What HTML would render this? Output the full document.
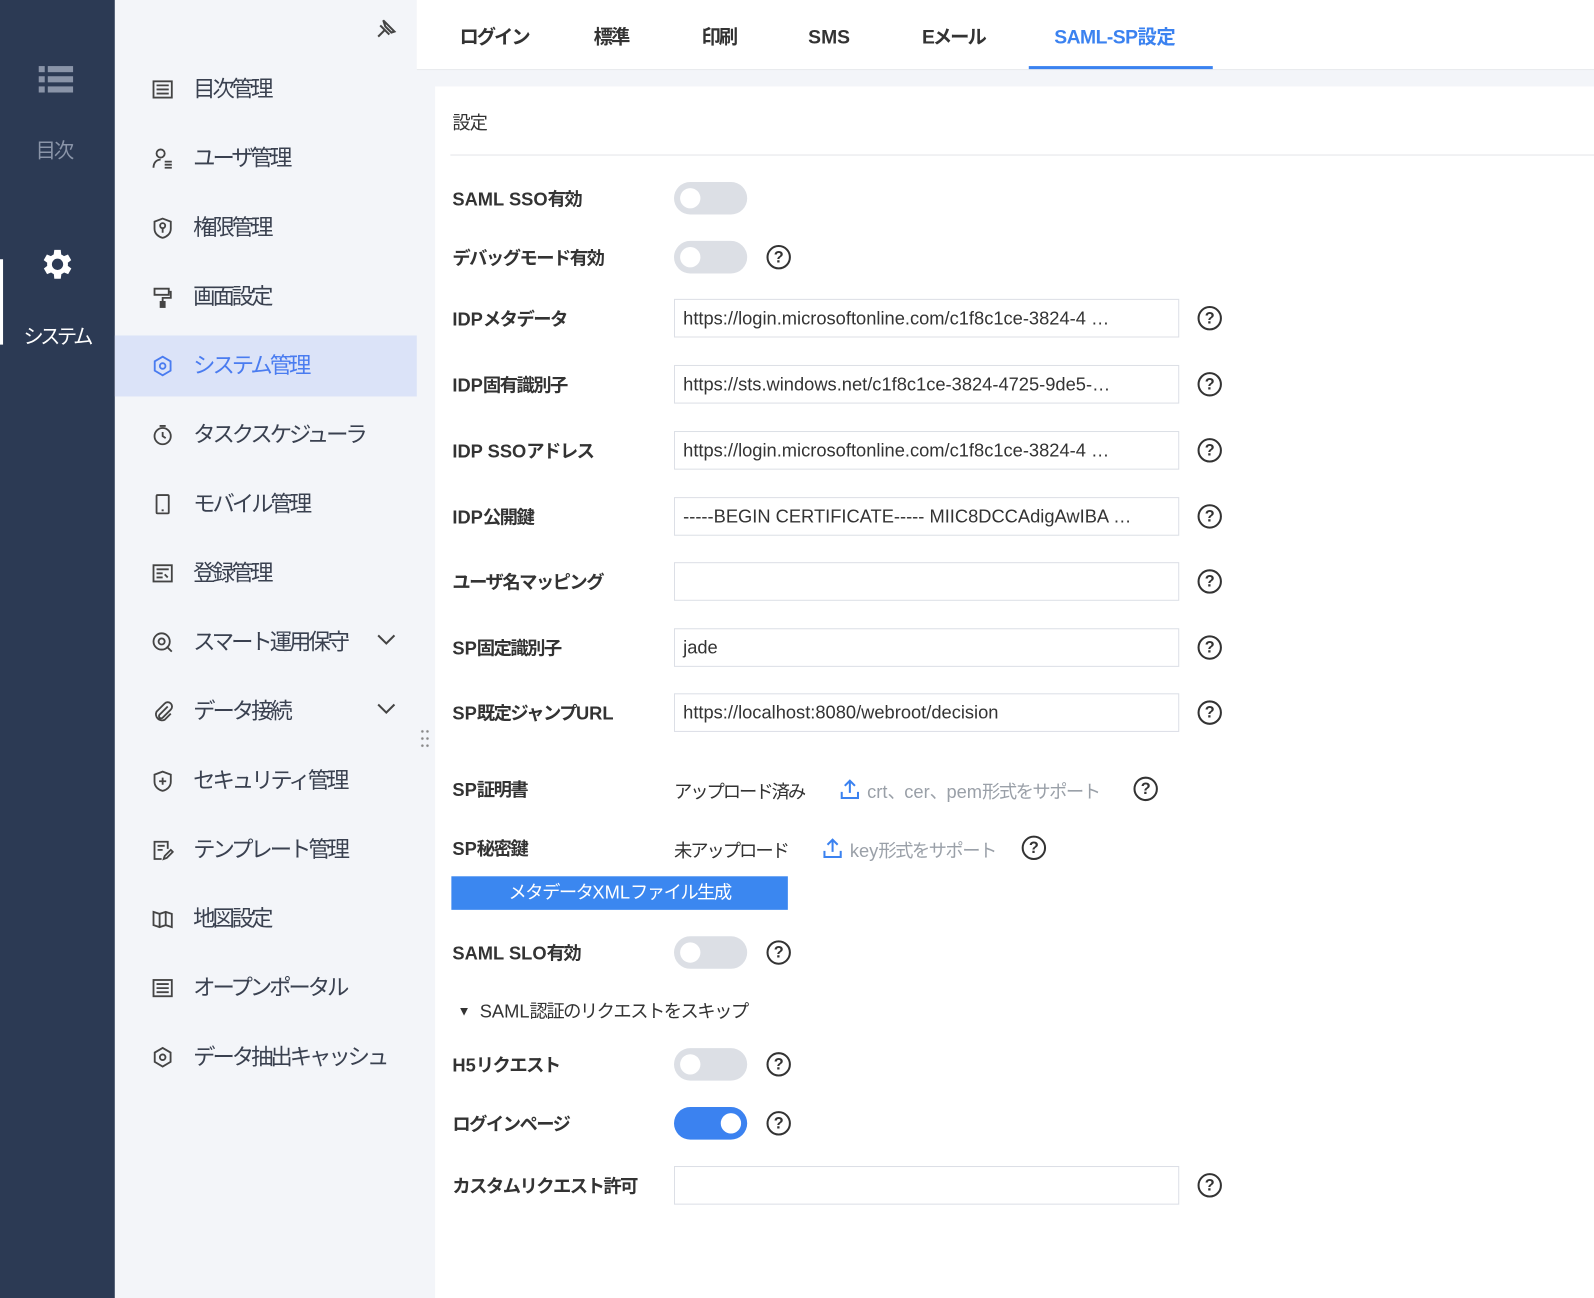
<!DOCTYPE html>
<html><head><meta charset="utf-8"><style>
*{box-sizing:border-box;margin:0;padding:0}
html,body{width:1594px;height:1298px;overflow:hidden;background:#f3f5f9}
body{font-family:"Liberation Sans","Noto Sans CJK JP",sans-serif;color:#333}
#w{position:absolute;left:0;top:0;width:1568px;height:1277px;transform:scale(1.01658);transform-origin:0 0}
.a{position:absolute}
.side{left:0;top:0;width:113px;height:1277px;background:#2c3a54}
.menu{left:113px;top:0;width:297px;height:1277px;background:#f3f5f9}
.mi{position:absolute;left:0;width:297px;height:60px;line-height:60px;font-size:22px;color:#3a4150;letter-spacing:-3px;white-space:nowrap}
.mi .t{position:absolute;left:77px}
.mi svg{position:absolute;left:36px;top:19px}
.mi.act{background:#dbe3f8;color:#4a7cf0}
.top{left:410px;top:0;width:1158px;height:69px;background:#fff;border-bottom:1px solid #e6e8eb}
.tab{position:absolute;top:25px;height:26px;line-height:26px;font-size:19px;font-weight:bold;color:#333;letter-spacing:-2px}
.card{left:428px;top:85px;width:1140px;height:1192px;background:#fff}
.lab{position:absolute;left:445px;font-size:18px;font-weight:bold;color:#333;transform:translateY(-50%);letter-spacing:-1.5px;white-space:nowrap}
.lab b{letter-spacing:0}
.tg{position:absolute;left:663px;width:72px;height:32px;border-radius:16px;background:#dcdfe5;transform:translateY(-50%)}
.tg:after{content:"";position:absolute;left:6px;top:6px;width:20px;height:20px;border-radius:50%;background:#fff}
.tg.on{background:#3b82f0}.tg.on:after{left:46px}
.inp{position:absolute;left:663px;width:497px;height:38px;border:1px solid #dcdfe6;font-size:18px;line-height:36px;padding-left:8px;color:#333;white-space:nowrap;overflow:hidden;transform:translateY(-50%);font-family:"Liberation Sans",sans-serif}
.q{position:absolute;width:24px;height:24px;border:2px solid #333;border-radius:50%;font-size:16px;font-weight:bold;text-align:center;line-height:21px;transform:translateY(-50%);color:#333}
.tx{position:absolute;font-size:18px;letter-spacing:-2px;white-space:nowrap}
.tx i{font-style:normal;letter-spacing:0}
</style></head><body><div id="w">
<div class="a side">
 <svg class="a" style="left:38px;top:64px" width="34" height="28" viewBox="0 0 34 28" fill="#8a94a8"><rect x="0" y="1" width="6" height="6"/><rect x="9" y="1" width="25" height="6"/><rect x="0" y="11" width="6" height="6"/><rect x="9" y="11" width="25" height="6"/><rect x="0" y="21" width="6" height="6"/><rect x="9" y="21" width="25" height="6"/></svg>
 <div class="a" style="left:35px;top:132px;font-size:20px;color:#8a94a8;letter-spacing:-2px">目次</div>
 <div class="a" style="left:0;top:255px;width:3px;height:84px;background:#fff"></div>
 <svg class="a" style="left:36px;top:241px" width="38" height="38" viewBox="0 0 24 24"><path fill="#fff" d="M19.4 13a7.5 7.5 0 000-2l2.1-1.6-2-3.5-2.5 1a7 7 0 00-1.7-1L15 3h-4l-.4 2.9a7 7 0 00-1.7 1l-2.5-1-2 3.5L6.6 11a7.5 7.5 0 000 2l-2.1 1.6 2 3.5 2.5-1a7 7 0 001.7 1L11 21h4l.4-2.9a7 7 0 001.7-1l2.5 1 2-3.5zM13 15.5A3.5 3.5 0 1113 8.5a3.5 3.5 0 010 7z"/></svg>
 <div class="a" style="left:23px;top:315px;font-size:20px;color:#fff;letter-spacing:-3.5px">システム</div>
</div>
<div class="a menu">
 <svg class="a" style="left:255px;top:16px" width="24" height="24" viewBox="0 0 24 24" fill="none" stroke="#444" stroke-width="2"><path d="M9 4l11 11-3 1-6-6zM4 20l6-6M6 9l9 9"/></svg>
 <div class="mi" style="top:58px"><svg width="22" height="22" viewBox="0 0 22 22" fill="none" stroke="#444" stroke-width="1.8"><rect x="2" y="3" width="18" height="16"/><path d="M5 7h12M5 11h12M5 15h12"/></svg><span class="t">目次管理</span></div>
 <div class="mi" style="top:126px"><svg width="22" height="22" viewBox="0 0 22 22" fill="none" stroke="#444" stroke-width="1.8"><circle cx="9" cy="6" r="4"/><path d="M2 20c0-5 3-8 7-8M13 14h7M13 17h7M13 20h7"/></svg><span class="t">ユーザ管理</span></div>
 <div class="mi" style="top:194px"><svg width="22" height="22" viewBox="0 0 22 22" fill="none" stroke="#444" stroke-width="1.8"><path d="M11 2l8 3v7c0 5-4 8-8 9-4-1-8-4-8-9V5z"/><circle cx="11" cy="9" r="2.5"/><path d="M11 12v4"/></svg><span class="t">権限管理</span></div>
 <div class="mi" style="top:262px"><svg width="22" height="22" viewBox="0 0 22 22" fill="none" stroke="#444" stroke-width="1.8"><path d="M3 3h14v6H3zM17 6h2v6h-8v4"/><rect x="9" y="16" width="4" height="5" fill="#444"/></svg><span class="t">画面設定</span></div>
 <div class="mi act" style="top:330px"><svg width="22" height="22" viewBox="0 0 24 24" fill="none" stroke="#4a7cf0" stroke-width="2"><path d="M12 2l8.5 5v10L12 22l-8.5-5V7z"/><circle cx="12" cy="12" r="3"/></svg><span class="t">システム管理</span></div>
 <div class="mi" style="top:398px"><svg width="22" height="22" viewBox="0 0 22 22" fill="none" stroke="#444" stroke-width="1.8"><circle cx="11" cy="12" r="8"/><path d="M11 8v4l3 2M8 2h6"/></svg><span class="t">タスクスケジューラ</span></div>
 <div class="mi" style="top:466px"><svg width="22" height="22" viewBox="0 0 22 22" fill="none" stroke="#444" stroke-width="1.8"><rect x="5" y="2" width="12" height="18" rx="1"/><path d="M10 17h2"/></svg><span class="t">モバイル管理</span></div>
 <div class="mi" style="top:534px"><svg width="22" height="22" viewBox="0 0 22 22" fill="none" stroke="#444" stroke-width="1.8"><rect x="2" y="3" width="18" height="16"/><path d="M5 7h12M5 11h6M5 15h6M13 12l3 3"/></svg><span class="t">登録管理</span></div>
 <div class="mi" style="top:602px"><svg width="22" height="22" viewBox="0 0 22 22" fill="none" stroke="#444" stroke-width="1.8"><circle cx="10" cy="10" r="8"/><circle cx="10" cy="10" r="3"/><path d="M15 15l5 5"/></svg><span class="t">スマート運用保守</span></div>
 <div class="mi" style="top:670px"><svg width="22" height="22" viewBox="0 0 22 22" fill="none" stroke="#444" stroke-width="1.8"><path d="M16 6l-8 8a2 2 0 003 3l8-8a4 4 0 00-6-6l-8 8a6 6 0 008 8l6-6"/></svg><span class="t">データ接続</span></div>
 <div class="mi" style="top:738px"><svg width="22" height="22" viewBox="0 0 22 22" fill="none" stroke="#444" stroke-width="1.8"><path d="M11 2l8 3v7c0 5-4 8-8 9-4-1-8-4-8-9V5z"/><path d="M11 8v7M7.5 11.5h7"/></svg><span class="t">セキュリティ管理</span></div>
 <div class="mi" style="top:806px"><svg width="22" height="22" viewBox="0 0 22 22" fill="none" stroke="#444" stroke-width="1.8"><path d="M16 10V3H3v17h7M6 7h7M6 11h5"/><path d="M12 20l1-3 6-6 2 2-6 6z"/></svg><span class="t">テンプレート管理</span></div>
 <div class="mi" style="top:874px"><svg width="22" height="22" viewBox="0 0 22 22" fill="none" stroke="#444" stroke-width="1.8"><path d="M2 4l6 2 6-2 6 2v13l-6-2-6 2-6-2zM8 6v13M14 4v13"/></svg><span class="t">地図設定</span></div>
 <div class="mi" style="top:942px"><svg width="22" height="22" viewBox="0 0 22 22" fill="none" stroke="#444" stroke-width="1.8"><rect x="2" y="3" width="18" height="16"/><path d="M5 7h12M5 11h12M5 15h12"/></svg><span class="t">オープンポータル</span></div>
 <div class="mi" style="top:1010px"><svg width="22" height="22" viewBox="0 0 24 24" fill="none" stroke="#444" stroke-width="2"><path d="M12 2l8.5 5v10L12 22l-8.5-5V7z"/><circle cx="12" cy="12" r="3"/></svg><span class="t">データ抽出キャッシュ</span></div>
 <svg class="a" style="left:258px;top:623px" width="18" height="12" viewBox="0 0 18 12" fill="none" stroke="#444" stroke-width="2"><path d="M1 2l8 8 8-8"/></svg>
 <svg class="a" style="left:258px;top:691px" width="18" height="12" viewBox="0 0 18 12" fill="none" stroke="#444" stroke-width="2"><path d="M1 2l8 8 8-8"/></svg>
</div>
<div class="a" style="left:413px;top:716px;width:10px;height:22px;background:radial-gradient(circle,#888 1px,transparent 1.5px) 0 0/5px 7px"></div>
<div class="a top">
 <span class="tab" style="left:42px">ログイン</span>
 <span class="tab" style="left:174px">標準</span>
 <span class="tab" style="left:280px">印刷</span>
 <span class="tab" style="left:385px;letter-spacing:0">SMS</span>
 <span class="tab" style="left:497px">Eメール</span>
 <span class="tab" style="left:627px;color:#3b82f0;letter-spacing:-0.5px">SAML-SP設定</span>
 <div class="a" style="left:602px;top:65px;width:181px;height:3px;background:#3b82f0"></div>
</div>
<div class="a card"></div>
<div class="a" style="left:445px;top:107px;font-size:18px;color:#333;letter-spacing:-1px">設定</div>
<div class="a" style="left:443px;top:152px;width:1125px;height:1px;background:#e3e5e8"></div>

<div class="lab" style="top:195px"><b>SAML SSO</b>有効</div><div class="tg" style="top:195px"></div>
<div class="lab" style="top:253px">デバッグモード有効</div><div class="tg" style="top:253px"></div><div class="q" style="left:754px;top:253px">?</div>
<div class="lab" style="top:313px"><b>IDP</b>メタデータ</div><div class="inp" style="top:313px">https://login.microsoftonline.com/c1f8c1ce-3824-4 …</div><div class="q" style="left:1178px;top:313px">?</div>
<div class="lab" style="top:378px"><b>IDP</b>固有識別子</div><div class="inp" style="top:378px">https://sts.windows.net/c1f8c1ce-3824-4725-9de5-…</div><div class="q" style="left:1178px;top:378px">?</div>
<div class="lab" style="top:443px"><b>IDP SSO</b>アドレス</div><div class="inp" style="top:443px">https://login.microsoftonline.com/c1f8c1ce-3824-4 …</div><div class="q" style="left:1178px;top:443px">?</div>
<div class="lab" style="top:508px"><b>IDP</b>公開鍵</div><div class="inp" style="top:508px">-----BEGIN CERTIFICATE----- MIIC8DCCAdigAwIBA …</div><div class="q" style="left:1178px;top:508px">?</div>
<div class="lab" style="top:572px">ユーザ名マッピング</div><div class="inp" style="top:572px"></div><div class="q" style="left:1178px;top:572px">?</div>
<div class="lab" style="top:637px"><b>SP</b>固定識別子</div><div class="inp" style="top:637px">jade</div><div class="q" style="left:1178px;top:637px">?</div>
<div class="lab" style="top:701px"><b>SP</b>既定ジャンプ<b>URL</b></div><div class="inp" style="top:701px">https://localhost:8080/webroot/decision</div><div class="q" style="left:1178px;top:701px">?</div>
<div class="lab" style="top:776px"><b>SP</b>証明書</div>
<div class="tx" style="left:663px;top:765px;color:#333">アップロード済み</div>
<svg class="a" style="left:825px;top:765px" width="22" height="22" viewBox="0 0 22 22" fill="none" stroke="#3b82f0" stroke-width="2"><path d="M11 15V3M6 8l5-5 5 5M3 14v6h16v-6"/></svg>
<div class="tx" style="left:853px;top:765px;color:#9aa0a8;letter-spacing:-1.5px"><i>crt</i>、<i>cer</i>、<i>pem</i>形式をサポート</div><div class="q" style="left:1115px;top:776px">?</div>
<div class="lab" style="top:834px"><b>SP</b>秘密鍵</div>
<div class="tx" style="left:663px;top:823px;color:#333">未アップロード</div>
<svg class="a" style="left:808px;top:823px" width="22" height="22" viewBox="0 0 22 22" fill="none" stroke="#3b82f0" stroke-width="2"><path d="M11 15V3M6 8l5-5 5 5M3 14v6h16v-6"/></svg>
<div class="tx" style="left:836px;top:823px;color:#9aa0a8;letter-spacing:-1.5px"><i>key</i>形式をサポート</div><div class="q" style="left:1005px;top:834px">?</div>
<div class="a" style="left:444px;top:862px;width:331px;height:33px;background:#3b87f0;color:#fff;font-size:18px;text-align:center;line-height:33px;letter-spacing:-1.5px">メタデータ<span style="letter-spacing:0">XML</span>ファイル生成</div>
<div class="lab" style="top:937px"><b>SAML SLO</b>有効</div><div class="tg" style="top:937px"></div><div class="q" style="left:754px;top:937px">?</div>
<div class="tx" style="left:450px;top:981px;color:#333;letter-spacing:-1.5px"><span style="font-size:13px;position:relative;top:-2px">▼</span>&nbsp;&nbsp; <i>SAML</i>認証のリクエストをスキップ</div>
<div class="lab" style="top:1047px"><b>H5</b>リクエスト</div><div class="tg" style="top:1047px"></div><div class="q" style="left:754px;top:1047px">?</div>
<div class="lab" style="top:1105px">ログインページ</div><div class="tg on" style="top:1105px"></div><div class="q" style="left:754px;top:1105px">?</div>
<div class="lab" style="top:1166px">カスタムリクエスト許可</div><div class="inp" style="top:1166px"></div><div class="q" style="left:1178px;top:1166px">?</div>
</div></body></html>
